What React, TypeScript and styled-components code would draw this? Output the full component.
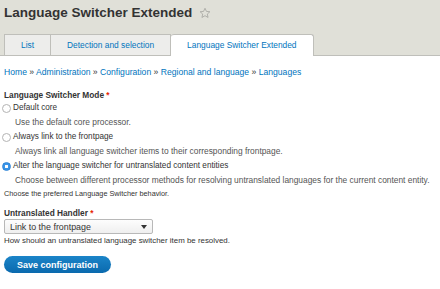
import styled, { createGlobalStyle } from "styled-components";

const Global = createGlobalStyle`
  body {
    margin: 0;
    background: #fff;
    font-family: "Liberation Sans", Arial, sans-serif;
    color: #333;
  }
`;

const App = () => {
  return (
    <>
      <Global />
      <Header>
        <Title>
          Language Switcher Extended
          <Star viewBox="0 0 24 24">
            <path d="M12 2.5l2.9 6.3 6.8.7-5.1 4.6 1.5 6.8L12 17.4l-6.1 3.5 1.5-6.8-5.1-4.6 6.8-.7z" />
          </Star>
        </Title>
        <Tabs>
          <Tab>List</Tab>
          <Tab>Detection and selection</Tab>
          <Tab $active>Language Switcher Extended</Tab>
        </Tabs>
      </Header>
      <Content>
        <Breadcrumb>
          <a>Home</a> » <a>Administration</a> » <a>Configuration</a> »{" "}
          <a>Regional and language</a> » <a>Languages</a>
        </Breadcrumb>

        <Label>
          Language Switcher Mode <Req>*</Req>
        </Label>
        <Radio label="Default core" description="Use the default core processor." />
        <Radio
          label="Always link to the frontpage"
          description="Always link all language switcher items to their corresponding frontpage."
        />
        <Radio
          checked
          label="Alter the language switcher for untranslated content entities"
          description="Choose between different processor methods for resolving untranslated languages for the current content entity."
        />
        <Help>Choose the preferred Language Switcher behavior.</Help>

        <Label $top={7}>
          Untranslated Handler <Req>*</Req>
        </Label>
        <Select>
          <span>Link to the frontpage</span>
          <Caret />
        </Select>
        <Help $top={1} $size={7.9}>
          How should an untranslated language switcher item be resolved.
        </Help>

        <Button>Save configuration</Button>
      </Content>
    </>
  );
};

const Radio = (props: { label: string; description: string; checked?: boolean }) => (
  <Option>
    <OptionRow>
      <Circle $checked={props.checked || false} />
      <span>{props.label}</span>
    </OptionRow>
    <OptionDesc>{props.description}</OptionDesc>
  </Option>
);

const Header = styled.header`
  background: #e0e0d8;
  border-bottom: 1px solid #bfbfba;
  padding: 2px 0 0 4px;
`;

const Title = styled.h1`
  margin: 0;
  display: flex;
  align-items: center;
  gap: 7px;
  font-size: 13.5px;
  font-weight: bold;
  color: #333;
  line-height: 22px;
`;

const Star = styled.svg`
  width: 12px;
  height: 12px;
  fill: none;
  stroke: #a3a39e;
  stroke-width: 1.6;
  stroke-linejoin: round;
  margin-top: -1px;
`;

const Tabs = styled.nav`
  display: flex;
  align-items: flex-end;
  margin-top: 10px;
`;

const Tab = styled.div<{ $active?: boolean }>`
  box-sizing: border-box;
  height: ${({ $active }) => ($active ? "22px" : "21px")};
  margin-bottom: ${({ $active }) => ($active ? "-1px" : "0")};
  line-height: 21px;
  padding: 0 16px;
  font-size: 8.4px;
  color: #0074bd;
  background: ${({ $active }) => ($active ? "#fff" : "#ededeb")};
  border: 1px solid #bfbfba;
  border-bottom: none;
  border-radius: ${({ $active }) => ($active ? "3px 3px 0 0" : "0")};
  position: relative;
  & + & {
    border-left: none;
  }
`;

const Content = styled.main`
  padding: 10px 4px;
  line-height: 12px;
`;

const Breadcrumb = styled.div`
  font-size: 8.6px;
  color: #333;
  margin-bottom: 11px;
  a {
    color: #0074bd;
  }
`;

const Label = styled.div<{ $top?: number }>`
  font-weight: bold;
  font-size: 8.3px;
  margin-top: ${({ $top }) => $top || 0}px;
`;

const Req = styled.span`
  color: #e62600;
`;

const Option = styled.div`
  margin-bottom: 1px;
`;

const OptionRow = styled.div`
  display: flex;
  align-items: center;
  gap: 2px;
  height: 14px;
  font-size: 8.2px;
  margin-left: -2px;
`;

const Circle = styled.span<{ $checked: boolean }>`
  width: 9px;
  height: 9px;
  border-radius: 50%;
  box-sizing: border-box;
  border: 1px solid ${({ $checked }) => ($checked ? "#2b84d8" : "#b3b3b3")};
  background: ${({ $checked }) =>
    $checked ? "radial-gradient(circle, #fff 0 1.4px, #3b95e8 1.9px)" : "#fff"};
`;

const OptionDesc = styled.div`
  font-size: 8.4px;
  color: #555;
  padding-left: 11px;
  line-height: 14px;
  white-space: nowrap;
`;

const Help = styled.div<{ $top?: number; $size?: number }>`
  font-size: ${({ $size }) => $size || 7.3}px;
  color: #333;
  line-height: 12px;
  margin-top: ${({ $top }) => $top || 0}px;
`;

const Select = styled.div`
  width: 149px;
  height: 15px;
  box-sizing: border-box;
  border: 1px solid #b8b8b8;
  border-radius: 2px;
  background: linear-gradient(#fdfdfd, #efefef);
  display: flex;
  align-items: center;
  justify-content: space-between;
  padding: 0 5px 0 5px;
  font-size: 8.9px;
  color: #333;
`;

const Caret = styled.span`
  width: 0;
  height: 0;
  border-left: 3px solid transparent;
  border-right: 3px solid transparent;
  border-top: 4px solid #333;
`;

const Button = styled.button`
  display: block;
  margin-top: 9px;
  width: 107px;
  height: 17px;
  border: none;
  border-radius: 9px;
  background: linear-gradient(#1b84c8, #0a6aae);
  color: #fff;
  font-family: "Liberation Sans", Arial, sans-serif;
  font-weight: bold;
  font-size: 9px;
  padding: 0;
`;

export default App;
